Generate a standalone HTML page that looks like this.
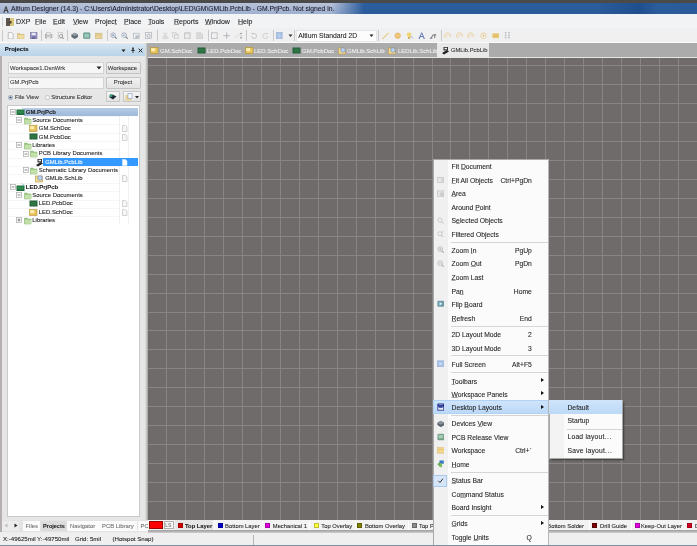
<!DOCTYPE html>
<html><head><meta charset="utf-8"><style>
*{margin:0;padding:0;box-sizing:border-box}
html,body{width:697px;height:546px;overflow:hidden;background:#ececec;font-family:"Liberation Sans",sans-serif;color:#222}
.a{position:absolute}
.t{position:absolute;white-space:pre;line-height:1;-webkit-text-stroke:0.08px currentColor}
u{text-decoration:underline;text-underline-offset:0.3px;text-decoration-thickness:0.5px;text-decoration-color:rgba(60,60,60,0.45)}
</style></head><body><div id="root" style="position:absolute;left:0;top:0;width:697px;height:546px;overflow:hidden;will-change:transform">
<div class="a" style="left:0px;top:0px;width:697px;height:14px;background:#2b5c9b"></div>
<div class="a" style="left:600px;top:2px;width:97px;height:12px;background:linear-gradient(90deg,#2a5a97,#1f4f8c 40%,#2c5d9b 60%,#2a5a98)"></div>
<div class="a" style="left:0px;top:0px;width:697px;height:2.5px;background:#4a4a4a"></div>
<div class="a" style="left:0px;top:2.5px;width:364px;height:11.5px;background:linear-gradient(90deg,rgba(43,92,155,0) 0%,rgba(43,92,155,0) 91%,#2b5c9b 100%),linear-gradient(180deg,#b9c3d9,#a9b7d4 60%,#9fb0d0)"></div>
<div class="a" style="left:600px;top:2.5px;width:0px;height:0px;"></div>
<svg class="a" style="left:3px;top:5.5px" width="6" height="7" viewBox="0 0 6 7"><path d="M0.3 6.7 L2.6 0.3 L3.4 0.3 L5.7 6.7 L4.6 6.7 L3 2 L1.4 6.7Z" fill="#3a3a3a"/><rect x="1.8" y="4" width="2.4" height="0.9" fill="#3a3a3a"/></svg>
<div class="t" style="left:11px;top:6.0px;font-size:6.75px;color:#1c1c2a">Altium Designer (14.3) - C:\Users\Administrator\Desktop\LED\GM\GMLib.PcbLib - GM.PrjPcb. Not signed in.</div>
<div class="a" style="left:0px;top:14px;width:697px;height:14px;background:#f2f3f5"></div>
<div class="a" style="left:2px;top:16.5px;width:1px;height:10px;background:#d4d4d4"></div>
<svg class="a" style="left:6px;top:17.5px" width="8" height="8.5" viewBox="0 0 8 8.5"><rect x="0" y="0" width="4" height="8.5" fill="#5f554c"/><rect x="4" y="0" width="4" height="8.5" fill="#d9c77e"/><rect x="3" y="3" width="2.5" height="2.5" fill="#4a4036"/></svg>
<div class="t" style="left:16px;top:17.7px;font-size:7px;color:#222">DXP</div>
<div class="t" style="left:35px;top:17.7px;font-size:7px;color:#222"><u>F</u>ile</div>
<div class="t" style="left:53px;top:17.7px;font-size:7px;color:#222"><u>E</u>dit</div>
<div class="t" style="left:73px;top:17.7px;font-size:7px;color:#222"><u>V</u>iew</div>
<div class="t" style="left:95px;top:17.7px;font-size:7px;color:#222">Projec<u>t</u></div>
<div class="t" style="left:124px;top:17.7px;font-size:7px;color:#222"><u>P</u>lace</div>
<div class="t" style="left:148px;top:17.7px;font-size:7px;color:#222"><u>T</u>ools</div>
<div class="t" style="left:174px;top:17.7px;font-size:7px;color:#222"><u>R</u>eports</div>
<div class="t" style="left:205px;top:17.7px;font-size:7px;color:#222"><u>W</u>indow</div>
<div class="t" style="left:238px;top:17.7px;font-size:7px;color:#222"><u>H</u>elp</div>
<div class="a" style="left:0px;top:28px;width:697px;height:14.5px;background:#f0f0f0"></div>
<div class="a" style="left:0px;top:41.5px;width:697px;height:1px;background:#fafafa"></div>
<div class="a" style="left:0px;top:42.5px;width:697px;height:1px;background:#bdbdbd"></div>
<div class="a" style="left:2px;top:30px;width:1px;height:11px;background:#c9c9c9"></div>
<div class="a" style="left:41px;top:30px;width:1px;height:11px;background:#c8c8c8"></div>
<div class="a" style="left:67px;top:30px;width:1px;height:11px;background:#c8c8c8"></div>
<div class="a" style="left:106.5px;top:30px;width:1px;height:11px;background:#c8c8c8"></div>
<div class="a" style="left:157px;top:30px;width:1px;height:11px;background:#c8c8c8"></div>
<div class="a" style="left:207.5px;top:30px;width:1px;height:11px;background:#c8c8c8"></div>
<div class="a" style="left:245.5px;top:30px;width:1px;height:11px;background:#c8c8c8"></div>
<div class="a" style="left:273px;top:30px;width:1px;height:11px;background:#c8c8c8"></div>
<div class="a" style="left:294.4px;top:30px;width:1px;height:11px;background:#c8c8c8"></div>
<div class="a" style="left:377.6px;top:30px;width:1px;height:11px;background:#c8c8c8"></div>
<div class="a" style="left:440.5px;top:30px;width:1px;height:11px;background:#c8c8c8"></div>
<svg class="a" style="left:7.31px;top:32.11px;opacity:0.8" width="7.38" height="7.38" viewBox="0 0 9 9"><path d="M1.5 0.5h4l2 2v6h-6z" fill="#fbfbfb" stroke="#a0a0a0" stroke-width="1"/></svg>
<svg class="a" style="left:17.31px;top:32.11px;opacity:0.8" width="7.38" height="7.38" viewBox="0 0 9 9"><path d="M0.5 2h3l1 1h4v5h-8z" fill="#e2c26a" stroke="#c0a050" stroke-width="0.8"/><path d="M1 4h8l-1 4h-7z" fill="#f1da8e"/></svg>
<svg class="a" style="left:30.31px;top:32.11px;opacity:0.8" width="7.38" height="7.38" viewBox="0 0 9 9"><rect x="0.5" y="0.5" width="8" height="8" fill="#7a78b8" stroke="#5a5890" stroke-width="0.8"/><rect x="2" y="1" width="5" height="3" fill="#e8e8f4"/><rect x="2.5" y="5.5" width="4" height="3" fill="#4a4880"/></svg>
<svg class="a" style="left:45.31px;top:32.11px;opacity:0.8" width="7.38" height="7.38" viewBox="0 0 9 9"><rect x="0.5" y="3" width="8" height="4" fill="#bfc3c8" stroke="#8a8e92" stroke-width="0.8"/><rect x="2" y="0.5" width="5" height="3" fill="#f4f4f4" stroke="#a0a0a0" stroke-width="0.6"/><rect x="2" y="6" width="5" height="2.5" fill="#fafafa" stroke="#a0a0a0" stroke-width="0.6"/></svg>
<svg class="a" style="left:57.31px;top:32.11px;opacity:0.8" width="7.38" height="7.38" viewBox="0 0 9 9"><path d="M1.5 0.5h5v8h-5z" fill="#f6f6f6" stroke="#a8a8a8" stroke-width="0.8"/><circle cx="5" cy="5" r="2" fill="none" stroke="#7a7a7a" stroke-width="1"/><path d="M6.5 6.5l2 2" stroke="#666" stroke-width="1"/></svg>
<svg class="a" style="left:71.31px;top:32.11px;opacity:0.8" width="7.38" height="7.38" viewBox="0 0 9 9"><path d="M4.5 1l4 2v3l-4 2.5l-4-2.5v-3z" fill="#3d4a55"/><path d="M4.5 1l4 2l-4 2l-4-2z" fill="#7d8c98"/></svg>
<svg class="a" style="left:83.31px;top:32.11px;opacity:0.8" width="7.38" height="7.38" viewBox="0 0 9 9"><rect x="0.5" y="1" width="8" height="7" rx="1" fill="#5d9a8c" stroke="#3f7b6e" stroke-width="0.8"/><rect x="2" y="2.5" width="5" height="4" fill="#8cc2b2"/></svg>
<svg class="a" style="left:95.31px;top:32.11px;opacity:0.8" width="7.38" height="7.38" viewBox="0 0 9 9"><rect x="0.5" y="1.5" width="8" height="6.5" fill="#e8cf86" stroke="#c4a95a" stroke-width="0.8"/><rect x="1" y="3" width="7" height="1" fill="#d1b465"/></svg>
<svg class="a" style="left:110.31px;top:32.11px;opacity:0.8" width="7.38" height="7.38" viewBox="0 0 9 9"><circle cx="3.8" cy="3.8" r="2.8" fill="#e9eef5" stroke="#8590a0" stroke-width="1"/><path d="M5.8 5.8l2.5 2.5" stroke="#6b7480" stroke-width="1.4"/><path d="M2.5 3.8h2.6M3.8 2.5v2.6" stroke="#5477b0" stroke-width="0.8"/></svg>
<svg class="a" style="left:121.31px;top:32.11px;opacity:0.8" width="7.38" height="7.38" viewBox="0 0 9 9"><circle cx="3.8" cy="3.8" r="2.8" fill="#e9eef5" stroke="#8590a0" stroke-width="1"/><path d="M5.8 5.8l2.5 2.5" stroke="#6b7480" stroke-width="1.4"/><path d="M2.5 3.8h2.6" stroke="#5477b0" stroke-width="0.8"/></svg>
<svg class="a" style="left:133.31px;top:32.11px;opacity:0.8" width="7.38" height="7.38" viewBox="0 0 9 9"><rect x="0.5" y="1.5" width="7" height="6.5" fill="#eef0f2" stroke="#9aa0a8" stroke-width="0.8"/><rect x="3" y="4" width="4" height="3.5" fill="#a8b2bd"/></svg>
<svg class="a" style="left:145.31px;top:32.11px;opacity:0.8" width="7.38" height="7.38" viewBox="0 0 9 9"><rect x="0.5" y="0.5" width="7.5" height="7.5" fill="#eef0f2" stroke="#9aa0a8" stroke-width="0.8"/><circle cx="4.5" cy="4.5" r="2" fill="none" stroke="#8a929c" stroke-width="0.9"/></svg>
<svg class="a" style="left:161.81px;top:32.11px;opacity:0.8" width="7.38" height="7.38" viewBox="0 0 9 9"><path d="M2 0.5l3 5M6 0.5l-3 5" stroke="#b9b9b9" stroke-width="0.9"/><circle cx="2.5" cy="7" r="1.4" fill="none" stroke="#b5b5b5" stroke-width="0.8"/><circle cx="5.8" cy="7" r="1.4" fill="none" stroke="#b5b5b5" stroke-width="0.8"/></svg>
<svg class="a" style="left:172.31px;top:32.11px;opacity:0.8" width="7.38" height="7.38" viewBox="0 0 9 9"><rect x="0.5" y="0.5" width="4.5" height="5.5" fill="#f4f4f4" stroke="#bdbdbd" stroke-width="0.8"/><rect x="3" y="3" width="4.5" height="5.5" fill="#eaeaea" stroke="#b5b5b5" stroke-width="0.8"/></svg>
<svg class="a" style="left:184.31px;top:32.11px;opacity:0.8" width="7.38" height="7.38" viewBox="0 0 9 9"><rect x="0.5" y="1" width="7" height="7.5" fill="#d8d8d8" stroke="#b0b0b0" stroke-width="0.8"/><rect x="2" y="3" width="4" height="4" fill="#eeeeee"/></svg>
<svg class="a" style="left:196.31px;top:32.11px;opacity:0.8" width="7.38" height="7.38" viewBox="0 0 9 9"><path d="M1 1h5l2 2v5.5h-7z" fill="#dcdcdc" stroke="#b8b8b8" stroke-width="0.8"/><path d="M2 4h4M2 6h4" stroke="#bcbcbc" stroke-width="0.6"/></svg>
<svg class="a" style="left:211.31px;top:32.11px;opacity:0.8" width="7.38" height="7.38" viewBox="0 0 9 9"><rect x="0.5" y="1" width="7" height="7" fill="none" stroke="#a0a4aa" stroke-width="0.9"/></svg>
<svg class="a" style="left:223.31px;top:32.11px;opacity:0.8" width="7.38" height="7.38" viewBox="0 0 9 9"><path d="M4.5 0.5v8M0.5 4.5h8" stroke="#8d939b" stroke-width="0.9"/></svg>
<svg class="a" style="left:234.31px;top:32.11px;opacity:0.8" width="7.38" height="7.38" viewBox="0 0 9 9"><path d="M1 5l2 2l4-5" fill="none" stroke="#d0d0d0" stroke-width="0.8"/></svg>
<svg class="a" style="left:238.95px;top:32.11px;opacity:0.8" width="4.10" height="7.38" viewBox="0 0 5 9"><path d="M2.5 0.5l1.5 2h-3zM2.5 8.5l1.5-2h-3z" fill="#727a84"/><path d="M2.5 2v5" stroke="#b0b4ba" stroke-width="0.8"/></svg>
<svg class="a" style="left:249.81px;top:32.11px;opacity:0.8" width="7.38" height="7.38" viewBox="0 0 9 9"><path d="M2 5a3 3 0 1 0 3-3h-2" fill="none" stroke="#b4b4b4" stroke-width="1.1"/><path d="M1.5 2l2-1.5v3z" fill="#b4b4b4"/></svg>
<svg class="a" style="left:262.31px;top:32.11px;opacity:0.8" width="7.38" height="7.38" viewBox="0 0 9 9"><path d="M7 5a3 3 0 1 1 -3-3h2" fill="none" stroke="#c4c4c4" stroke-width="1.1"/><path d="M7.5 2l-2-1.5v3z" fill="#c4c4c4"/></svg>
<svg class="a" style="left:276.31px;top:32.11px;opacity:0.8" width="7.38" height="7.38" viewBox="0 0 9 9"><rect x="0.5" y="0.5" width="7" height="8" fill="#9db9e2" stroke="#7e9ccc" stroke-width="0.8"/><path d="M4 1v7M1 4.5h6" stroke="#c0d4f0" stroke-width="0.6"/></svg>
<svg class="a" style="left:287.5px;top:34px" width="5" height="3" viewBox="0 0 5 3"><path d="M0.5 0.5h4l-2 2.5z" fill="#333"/></svg>
<div class="a" style="left:295.5px;top:29.5px;width:81px;height:12px;background:#fcfcfc;border:1px solid #e6e6e6"></div>
<div class="t" style="left:298.2px;top:32.98px;font-size:6.8px;color:#1e1e1e">Altium Standard 2D</div>
<svg class="a" style="left:368.5px;top:34px" width="5" height="3" viewBox="0 0 5 3"><path d="M0.5 0.5h4l-2 2.5z" fill="#222"/></svg>
<svg class="a" style="left:382.31px;top:32.11px;opacity:0.8" width="7.38" height="7.38" viewBox="0 0 9 9"><path d="M1 8l7-7" stroke="#e3c76a" stroke-width="1.4"/><path d="M0.5 8.5l1.5-0.5l-1-1z" fill="#c9a64a"/></svg>
<svg class="a" style="left:393.81px;top:32.11px;opacity:0.8" width="7.38" height="7.38" viewBox="0 0 9 9"><circle cx="4.5" cy="4.5" r="3.3" fill="#f1bf5e" stroke="#dc9d3a" stroke-width="0.9"/></svg>
<svg class="a" style="left:406.31px;top:32.11px;opacity:0.8" width="7.38" height="7.38" viewBox="0 0 9 9"><circle cx="3.8" cy="3.5" r="2.9" fill="#f3cf5a"/><rect x="2.5" y="6" width="2.6" height="2.5" fill="#c9a34a"/><path d="M6 5l2.5 3" stroke="#5a7aa8" stroke-width="0.9"/></svg>
<svg class="a" style="left:417.81px;top:32.11px;opacity:0.8" width="7.38" height="7.38" viewBox="0 0 9 9"><path d="M0.5 8.5L4 0.5h1L8.5 8.5h-1.5l-1-2.5h-3l-1 2.5z M3.3 5h2.4L4.5 2z" fill="#3d5fa8" fill-rule="evenodd"/></svg>
<svg class="a" style="left:429.40px;top:32.11px;opacity:0.8" width="8.20" height="7.38" viewBox="0 0 10 9"><path d="M1 7.5h3M3 7.5l1.5-4M5 3.5h4M7 3.5v4" stroke="#3e444c" stroke-width="1.1" fill="none"/></svg>
<svg class="a" style="left:444.31px;top:32.11px;opacity:0.8" width="7.38" height="7.38" viewBox="0 0 9 9"><path d="M2.2 7.6A3.6 3.6 0 1 1 7.6 6" fill="none" stroke="#e8bf74" stroke-width="1.1"/><path d="M3.6 6A1.2 1.2 0 1 1 5.6 5" fill="none" stroke="#e6c088" stroke-width="0.8"/></svg>
<svg class="a" style="left:455.81px;top:32.11px;opacity:0.8" width="7.38" height="7.38" viewBox="0 0 9 9"><path d="M2.2 7.6A3.6 3.6 0 1 1 7.6 6" fill="none" stroke="#e8bf74" stroke-width="1.1"/><path d="M3.6 6A1.2 1.2 0 1 1 5.6 5" fill="none" stroke="#e6c088" stroke-width="0.8"/></svg>
<svg class="a" style="left:467.11px;top:32.11px;opacity:0.8" width="7.38" height="7.38" viewBox="0 0 9 9"><path d="M2.2 7.6A3.6 3.6 0 1 1 7.6 6" fill="none" stroke="#e8bf74" stroke-width="1.1"/><path d="M3.6 6A1.2 1.2 0 1 1 5.6 5" fill="none" stroke="#e6c088" stroke-width="0.8"/></svg>
<svg class="a" style="left:480.31px;top:32.11px;opacity:0.8" width="7.38" height="7.38" viewBox="0 0 9 9"><circle cx="4.3" cy="4.5" r="3.4" fill="none" stroke="#ecc37a" stroke-width="1.1"/><circle cx="4.3" cy="4.5" r="1" fill="#d0a050"/></svg>
<svg class="a" style="left:491.81px;top:32.11px;opacity:0.8" width="7.38" height="7.38" viewBox="0 0 9 9"><rect x="0.5" y="1.5" width="8" height="6" fill="#ebc45e"/><path d="M1 3.5h7M1 5.5h7" stroke="#c99a35" stroke-width="0.7"/></svg>
<svg class="a" style="left:504.31px;top:32.11px;opacity:0.8" width="7.38" height="7.38" viewBox="0 0 9 9"><path d="M1 1h2M5 1h2M1 4h2M5 4h2M1 7h2M5 7h2" stroke="#7b8a9a" stroke-width="1"/><path d="M2 1v6M6 1v6" stroke="#b8c2cc" stroke-width="0.6"/></svg>
<div class="a" style="left:0px;top:43px;width:146px;height:489px;background:#e6e6e6"></div>
<div class="a" style="left:0px;top:56px;width:1.5px;height:476px;background:#b4b0b0"></div>
<div class="a" style="left:0px;top:43.5px;width:145px;height:12.5px;background:linear-gradient(180deg,#d3e5f2,#bad3e8)"></div>
<div class="t" style="left:4.8px;top:46.49px;font-size:6px;font-weight:bold;color:#101820;-webkit-text-stroke:0.15px currentColor">Projects</div>
<svg class="a" style="left:121px;top:48.5px" width="5" height="4" viewBox="0 0 5 4"><path d="M0.5 0.5h4l-2 2.5z" fill="#1a1a1a"/></svg>
<svg class="a" style="left:130.5px;top:47px" width="4" height="6" viewBox="0 0 4 6"><path d="M1.2 0.5h1.6v3h-1.6z" fill="#333"/><path d="M0.3 3.5h3.4M2 3.5v2.5" stroke="#222" stroke-width="0.8" fill="none"/></svg>
<svg class="a" style="left:138px;top:47.8px" width="5" height="5" viewBox="0 0 5 5"><path d="M0.7 0.7l3.6 3.6M4.3 0.7l-3.6 3.6" stroke="#1a1a1a" stroke-width="1"/></svg>
<div class="a" style="left:7.5px;top:61.5px;width:96px;height:12.5px;background:#f6f6f6;border:1px solid #d3d3d3"></div>
<div class="t" style="left:10px;top:65.53px;font-size:5.9px;color:#333">Workspace1.DsnWrk</div>
<svg class="a" style="left:95.5px;top:66px" width="6" height="4" viewBox="0 0 6 4"><path d="M0.5 0.5h5l-2.5 3z" fill="#222"/></svg>
<div class="a" style="left:105.5px;top:61.5px;width:35px;height:12.5px;background:linear-gradient(180deg,#f2f2f2,#e2e2e2);border:1px solid #c3c3c3;border-radius:1px"></div>
<div class="t" style="left:107.7px;top:65.53px;font-size:5.9px;color:#333">Workspace</div>
<div class="a" style="left:7.5px;top:76.5px;width:96px;height:12px;background:#f6f6f6;border:1px solid #d3d3d3"></div>
<div class="t" style="left:10px;top:80.23px;font-size:5.9px;color:#333">GM.PrjPcb</div>
<div class="a" style="left:105.5px;top:76.5px;width:35px;height:12px;background:linear-gradient(180deg,#f2f2f2,#e2e2e2);border:1px solid #c3c3c3;border-radius:1px"></div>
<div class="t" style="left:113.8px;top:80.43px;font-size:5.9px;color:#333">Project</div>
<svg class="a" style="left:7.5px;top:94.5px" width="5" height="5" viewBox="0 0 5 5"><circle cx="2.5" cy="2.5" r="2.1" fill="#e8eef4" stroke="#8a98a8" stroke-width="0.7"/><circle cx="2.5" cy="2.5" r="1.1" fill="#2e4d72"/></svg>
<div class="t" style="left:15px;top:94.63px;font-size:5.9px;color:#333">File View</div>
<svg class="a" style="left:44.5px;top:94.5px" width="5" height="5" viewBox="0 0 5 5"><circle cx="2.5" cy="2.5" r="2.1" fill="#f4f4f4" stroke="#b8b8b8" stroke-width="0.7"/></svg>
<div class="t" style="left:51.3px;top:94.63px;font-size:5.9px;color:#333">Structure Editor</div>
<div class="a" style="left:105.5px;top:91px;width:14px;height:10.5px;background:linear-gradient(180deg,#f6f6f6,#e2e2e2);border:1px solid #c8c8c8"></div>
<svg class="a" style="left:108px;top:92.5px" width="9" height="8" viewBox="0 0 9 8"><path d="M1 4l3.5-2.5l4 2l-3.5 3z" fill="#1d2a38"/><circle cx="3" cy="2.5" r="1.5" fill="#3a9a7a"/></svg>
<div class="a" style="left:122.5px;top:91px;width:18px;height:10.5px;background:linear-gradient(180deg,#f6f6f6,#e2e2e2);border:1px solid #c8c8c8"></div>
<svg class="a" style="left:124.5px;top:92.5px" width="9" height="8" viewBox="0 0 9 8"><rect x="0.5" y="2" width="6" height="5.5" fill="#e9d28c"/><rect x="3" y="0.5" width="4" height="5" fill="#f8f8ff" stroke="#7f9cc8" stroke-width="0.6"/></svg>
<svg class="a" style="left:134.5px;top:95.5px" width="4" height="3" viewBox="0 0 4 3"><path d="M0 0h4l-2 2.5z" fill="#222"/></svg>
<div class="a" style="left:7px;top:104.5px;width:133px;height:412px;background:#fff;border:1px solid #c9c9c9"></div>
<div class="a" style="left:119.2px;top:116px;width:0.8px;height:108px;background:#efefef"></div>
<div class="a" style="left:128.2px;top:116px;width:0.8px;height:108px;background:#efefef"></div>
<div class="a" style="left:23.5px;top:107.9px;width:114.5px;height:8px;background:linear-gradient(180deg,#b6cbe6,#9fb9dc)"></div>
<div class="a" style="left:8px;top:116.0px;width:111px;height:0.5px;background:#f6f6f6"></div>
<div class="t" style="left:25.8px;top:109.61px;font-size:5.95px;font-weight:bold;color:#222;-webkit-text-stroke:0.08px currentColor;">GM.PrjPcb</div>
<svg class="a" style="left:16.0px;top:107.4px" width="9" height="9" viewBox="0 0 9 9"><rect x="0.5" y="2.5" width="8" height="5.5" fill="#1f6b3a"/><rect x="1.5" y="3.5" width="6" height="3" fill="#2f8a4f"/><path d="M6 0.5l2 2" stroke="#5aa0c8" stroke-width="0.8"/></svg>
<svg class="a" style="left:9.8px;top:108.9px" width="6" height="6" viewBox="0 0 6 6"><rect x="0.5" y="0.5" width="5" height="5" fill="#fff" stroke="#a8a8a8" stroke-width="0.7"/><path d="M1.5 3h3" stroke="#555" stroke-width="0.7"/></svg>
<div class="a" style="left:8px;top:124.35px;width:111px;height:0.5px;background:#f6f6f6"></div>
<div class="t" style="left:32.3px;top:117.96px;font-size:5.95px;color:#222;-webkit-text-stroke:0.08px currentColor;">Source Documents</div>
<svg class="a" style="left:22.499999999999996px;top:115.75px" width="9" height="9" viewBox="0 0 9 9"><path d="M1.5 2h2.5l1 1h3v5h-6.5z" fill="#9cc783" stroke="#82b06a" stroke-width="0.5"/><rect x="2" y="3.8" width="6.3" height="4" fill="#c3e0aa"/></svg>
<svg class="a" style="left:16.299999999999997px;top:117.25px" width="6" height="6" viewBox="0 0 6 6"><rect x="0.5" y="0.5" width="5" height="5" fill="#fff" stroke="#a8a8a8" stroke-width="0.7"/><path d="M1.5 3h3" stroke="#555" stroke-width="0.7"/></svg>
<div class="a" style="left:8px;top:132.7px;width:111px;height:0.5px;background:#f6f6f6"></div>
<div class="t" style="left:38.8px;top:126.31px;font-size:5.95px;color:#222;-webkit-text-stroke:0.08px currentColor;">GM.SchDoc</div>
<svg class="a" style="left:28.999999999999996px;top:124.1px" width="9" height="9" viewBox="0 0 9 9"><rect x="0.5" y="1.5" width="7.5" height="6" fill="#e7c35a" stroke="#b59333" stroke-width="0.6"/><rect x="1.2" y="2.2" width="4" height="3" fill="#fbeeb6"/></svg>
<svg class="a" style="left:122px;top:125.3px" width="6" height="7" viewBox="0 0 6 7"><path d="M0.5 0.5h3l1.5 1.5v4.5h-4.5z" fill="#f6f6f6" stroke="#b8b8b8" stroke-width="0.6"/></svg>
<div class="a" style="left:8px;top:141.04999999999998px;width:111px;height:0.5px;background:#f6f6f6"></div>
<div class="t" style="left:38.8px;top:134.66px;font-size:5.95px;color:#222;-webkit-text-stroke:0.08px currentColor;">GM.PcbDoc</div>
<svg class="a" style="left:28.999999999999996px;top:132.45px" width="9" height="9" viewBox="0 0 9 9"><rect x="0.5" y="1.5" width="8" height="6" fill="#245e37"/><rect x="1.5" y="2.5" width="6" height="4" fill="#2e7444"/></svg>
<svg class="a" style="left:122px;top:133.64999999999998px" width="6" height="7" viewBox="0 0 6 7"><path d="M0.5 0.5h3l1.5 1.5v4.5h-4.5z" fill="#f6f6f6" stroke="#b8b8b8" stroke-width="0.6"/></svg>
<div class="a" style="left:8px;top:149.4px;width:111px;height:0.5px;background:#f6f6f6"></div>
<div class="t" style="left:32.3px;top:143.01px;font-size:5.95px;color:#222;-webkit-text-stroke:0.08px currentColor;">Libraries</div>
<svg class="a" style="left:22.499999999999996px;top:140.8px" width="9" height="9" viewBox="0 0 9 9"><path d="M1.5 2h2.5l1 1h3v5h-6.5z" fill="#9cc783" stroke="#82b06a" stroke-width="0.5"/><rect x="2" y="3.8" width="6.3" height="4" fill="#c3e0aa"/></svg>
<svg class="a" style="left:16.299999999999997px;top:142.3px" width="6" height="6" viewBox="0 0 6 6"><rect x="0.5" y="0.5" width="5" height="5" fill="#fff" stroke="#a8a8a8" stroke-width="0.7"/><path d="M1.5 3h3" stroke="#555" stroke-width="0.7"/></svg>
<div class="a" style="left:8px;top:157.75px;width:111px;height:0.5px;background:#f6f6f6"></div>
<div class="t" style="left:38.8px;top:151.36px;font-size:5.95px;color:#222;-webkit-text-stroke:0.08px currentColor;">PCB Library Documents</div>
<svg class="a" style="left:28.999999999999996px;top:149.15px" width="9" height="9" viewBox="0 0 9 9"><path d="M1.5 2h2.5l1 1h3v5h-6.5z" fill="#9cc783" stroke="#82b06a" stroke-width="0.5"/><rect x="2" y="3.8" width="6.3" height="4" fill="#c3e0aa"/></svg>
<svg class="a" style="left:22.799999999999997px;top:150.65px" width="6" height="6" viewBox="0 0 6 6"><rect x="0.5" y="0.5" width="5" height="5" fill="#fff" stroke="#a8a8a8" stroke-width="0.7"/><path d="M1.5 3h3" stroke="#555" stroke-width="0.7"/></svg>
<div class="a" style="left:43px;top:158.0px;width:95px;height:8px;background:#3399ff"></div>
<div class="a" style="left:8px;top:166.1px;width:111px;height:0.5px;background:#f6f6f6"></div>
<div class="t" style="left:45.2px;top:159.71px;font-size:5.95px;color:#fff;-webkit-text-stroke:0.08px currentColor;">GMLib.PcbLib</div>
<svg class="a" style="left:35.400000000000006px;top:157.5px" width="9" height="9" viewBox="0 0 9 9"><path d="M1 7l5-3l2 1.5l-5 3z" fill="#222"/><rect x="2.5" y="1" width="4.5" height="3.5" fill="#333"/><rect x="3.5" y="1.8" width="2.5" height="1.5" fill="#eee"/></svg>
<svg class="a" style="left:122px;top:158.7px" width="6" height="7" viewBox="0 0 6 7"><path d="M0.5 0.5h3l1.5 1.5v4.5h-4.5z" fill="#ffffff" stroke="#dfefff" stroke-width="0.6"/></svg>
<div class="a" style="left:8px;top:174.45px;width:111px;height:0.5px;background:#f6f6f6"></div>
<div class="t" style="left:38.8px;top:168.06px;font-size:5.95px;color:#222;-webkit-text-stroke:0.08px currentColor;">Schematic Library Documents</div>
<svg class="a" style="left:28.999999999999996px;top:165.85px" width="9" height="9" viewBox="0 0 9 9"><path d="M1.5 2h2.5l1 1h3v5h-6.5z" fill="#9cc783" stroke="#82b06a" stroke-width="0.5"/><rect x="2" y="3.8" width="6.3" height="4" fill="#c3e0aa"/></svg>
<svg class="a" style="left:22.799999999999997px;top:167.35px" width="6" height="6" viewBox="0 0 6 6"><rect x="0.5" y="0.5" width="5" height="5" fill="#fff" stroke="#a8a8a8" stroke-width="0.7"/><path d="M1.5 3h3" stroke="#555" stroke-width="0.7"/></svg>
<div class="a" style="left:8px;top:182.79999999999998px;width:111px;height:0.5px;background:#f6f6f6"></div>
<div class="t" style="left:45.2px;top:176.41px;font-size:5.95px;color:#222;-webkit-text-stroke:0.08px currentColor;">GMLib.SchLib</div>
<svg class="a" style="left:35.400000000000006px;top:174.2px" width="9" height="9" viewBox="0 0 9 9"><rect x="0.5" y="2" width="7" height="6" fill="#f3d98a" stroke="#b89a50" stroke-width="0.6"/><circle cx="5" cy="4" r="2.3" fill="#bcd0f0" stroke="#6a88c0" stroke-width="0.6"/></svg>
<svg class="a" style="left:122px;top:175.39999999999998px" width="6" height="7" viewBox="0 0 6 7"><path d="M0.5 0.5h3l1.5 1.5v4.5h-4.5z" fill="#f6f6f6" stroke="#b8b8b8" stroke-width="0.6"/></svg>
<div class="a" style="left:8px;top:191.15px;width:111px;height:0.5px;background:#f6f6f6"></div>
<div class="t" style="left:25.8px;top:184.76px;font-size:5.95px;font-weight:bold;color:#222;-webkit-text-stroke:0.08px currentColor;">LED.PrjPcb</div>
<svg class="a" style="left:16.0px;top:182.55px" width="9" height="9" viewBox="0 0 9 9"><rect x="0.5" y="2.5" width="8" height="5.5" fill="#1f6b3a"/><rect x="1.5" y="3.5" width="6" height="3" fill="#2f8a4f"/><path d="M6 0.5l2 2" stroke="#5aa0c8" stroke-width="0.8"/></svg>
<svg class="a" style="left:9.8px;top:184.05px" width="6" height="6" viewBox="0 0 6 6"><rect x="0.5" y="0.5" width="5" height="5" fill="#fff" stroke="#a8a8a8" stroke-width="0.7"/><path d="M1.5 3h3" stroke="#555" stroke-width="0.7"/></svg>
<div class="a" style="left:8px;top:199.5px;width:111px;height:0.5px;background:#f6f6f6"></div>
<div class="t" style="left:32.3px;top:193.11px;font-size:5.95px;color:#222;-webkit-text-stroke:0.08px currentColor;">Source Documents</div>
<svg class="a" style="left:22.499999999999996px;top:190.9px" width="9" height="9" viewBox="0 0 9 9"><path d="M1.5 2h2.5l1 1h3v5h-6.5z" fill="#9cc783" stroke="#82b06a" stroke-width="0.5"/><rect x="2" y="3.8" width="6.3" height="4" fill="#c3e0aa"/></svg>
<svg class="a" style="left:16.299999999999997px;top:192.4px" width="6" height="6" viewBox="0 0 6 6"><rect x="0.5" y="0.5" width="5" height="5" fill="#fff" stroke="#a8a8a8" stroke-width="0.7"/><path d="M1.5 3h3" stroke="#555" stroke-width="0.7"/></svg>
<div class="a" style="left:8px;top:207.85px;width:111px;height:0.5px;background:#f6f6f6"></div>
<div class="t" style="left:38.8px;top:201.46px;font-size:5.95px;color:#222;-webkit-text-stroke:0.08px currentColor;">LED.PcbDoc</div>
<svg class="a" style="left:28.999999999999996px;top:199.25px" width="9" height="9" viewBox="0 0 9 9"><rect x="0.5" y="1.5" width="8" height="6" fill="#245e37"/><rect x="1.5" y="2.5" width="6" height="4" fill="#2e7444"/></svg>
<svg class="a" style="left:122px;top:200.45px" width="6" height="7" viewBox="0 0 6 7"><path d="M0.5 0.5h3l1.5 1.5v4.5h-4.5z" fill="#f6f6f6" stroke="#b8b8b8" stroke-width="0.6"/></svg>
<div class="a" style="left:8px;top:216.2px;width:111px;height:0.5px;background:#f6f6f6"></div>
<div class="t" style="left:38.8px;top:209.81px;font-size:5.95px;color:#222;-webkit-text-stroke:0.08px currentColor;">LED.SchDoc</div>
<svg class="a" style="left:28.999999999999996px;top:207.6px" width="9" height="9" viewBox="0 0 9 9"><rect x="0.5" y="1.5" width="7.5" height="6" fill="#e7c35a" stroke="#b59333" stroke-width="0.6"/><rect x="1.2" y="2.2" width="4" height="3" fill="#fbeeb6"/></svg>
<svg class="a" style="left:122px;top:208.79999999999998px" width="6" height="7" viewBox="0 0 6 7"><path d="M0.5 0.5h3l1.5 1.5v4.5h-4.5z" fill="#f6f6f6" stroke="#b8b8b8" stroke-width="0.6"/></svg>
<div class="t" style="left:32.3px;top:218.16px;font-size:5.95px;color:#222;-webkit-text-stroke:0.08px currentColor;">Libraries</div>
<svg class="a" style="left:22.499999999999996px;top:215.95px" width="9" height="9" viewBox="0 0 9 9"><path d="M1.5 2h2.5l1 1h3v5h-6.5z" fill="#9cc783" stroke="#82b06a" stroke-width="0.5"/><rect x="2" y="3.8" width="6.3" height="4" fill="#c3e0aa"/></svg>
<svg class="a" style="left:16.299999999999997px;top:217.45px" width="6" height="6" viewBox="0 0 6 6"><rect x="0.5" y="0.5" width="5" height="5" fill="#fff" stroke="#a8a8a8" stroke-width="0.7"/><path d="M1.5 3h3" stroke="#555" stroke-width="0.7"/><path d="M3 1.5v3" stroke="#555" stroke-width="0.7"/></svg>
<div class="a" style="left:1.5px;top:519.5px;width:146.5px;height:12px;background:#e3e3e3"></div>
<div class="a" style="left:2px;top:520.5px;width:17px;height:10px;background:#ececec"></div>
<svg class="a" style="left:4px;top:522.5px" width="4" height="5" viewBox="0 0 4 5"><path d="M3.5 0.5v4l-3-2z" fill="#c0c0c0"/></svg>
<svg class="a" style="left:13.5px;top:522.5px" width="4" height="5" viewBox="0 0 4 5"><path d="M0.5 0.5v4l3-2z" fill="#222"/></svg>
<div class="a" style="left:22.5px;top:520.5px;width:17.5px;height:10px;background:#fbfbfb"></div>
<div class="t" style="left:25.5px;top:523.93px;font-size:5.9px;color:#707070;">Files</div>
<div class="a" style="left:40.5px;top:520.5px;width:26px;height:10px;background:#dcdcdc"></div>
<div class="t" style="left:43.1px;top:524.08px;font-size:5.5px;color:#222;font-weight:bold;">Projects</div>
<div class="a" style="left:67px;top:520.5px;width:31.5px;height:10px;background:#fbfbfb"></div>
<div class="t" style="left:70px;top:523.93px;font-size:5.9px;color:#707070;">Navigator</div>
<div class="a" style="left:99px;top:520.5px;width:38px;height:10px;background:#fbfbfb"></div>
<div class="t" style="left:102px;top:523.93px;font-size:5.9px;color:#707070;">PCB Library</div>
<div class="a" style="left:137.5px;top:520.5px;width:10.5px;height:10px;background:#fbfbfb"></div>
<div class="t" style="left:140.5px;top:523.93px;font-size:5.9px;color:#707070;">PC</div>
<div class="a" style="left:145px;top:43px;width:3px;height:476.5px;background:linear-gradient(90deg,#dedede 0,#d8d8d8 30%,#9c9c9c 100%)"></div>
<div class="a" style="left:148px;top:43px;width:549px;height:14px;background:#ababab"></div>
<div class="a" style="left:148px;top:56.6px;width:549px;height:1.6px;background:#e6e6e6"></div>
<div class="a" style="left:437px;top:43px;width:52px;height:14px;background:#e8e8e8"></div>
<svg class="a" style="left:149.5px;top:46px" width="9" height="9" viewBox="0 0 9 9"><rect x="0.5" y="1.5" width="7.5" height="6" fill="#e7c35a" stroke="#b59333" stroke-width="0.6"/><rect x="1.2" y="2.2" width="4" height="3" fill="#fbeeb6"/></svg>
<div class="t" style="left:160px;top:47.59px;font-size:6px;color:#f0f0f0">GM.SchDoc</div>
<svg class="a" style="left:196.5px;top:46px" width="9" height="9" viewBox="0 0 9 9"><rect x="0.5" y="1.5" width="8" height="6" fill="#245e37"/><rect x="1.5" y="2.5" width="6" height="4" fill="#2e7444"/></svg>
<div class="t" style="left:207px;top:47.59px;font-size:6px;color:#f0f0f0">LED.PcbDoc</div>
<svg class="a" style="left:244.5px;top:46px" width="9" height="9" viewBox="0 0 9 9"><rect x="0.5" y="1.5" width="7.5" height="6" fill="#e7c35a" stroke="#b59333" stroke-width="0.6"/><rect x="1.2" y="2.2" width="4" height="3" fill="#fbeeb6"/></svg>
<div class="t" style="left:254px;top:47.59px;font-size:6px;color:#f0f0f0">LED.SchDoc</div>
<svg class="a" style="left:292px;top:46px" width="9" height="9" viewBox="0 0 9 9"><rect x="0.5" y="1.5" width="8" height="6" fill="#245e37"/><rect x="1.5" y="2.5" width="6" height="4" fill="#2e7444"/></svg>
<div class="t" style="left:302px;top:47.59px;font-size:6px;color:#f0f0f0">GM.PcbDoc</div>
<svg class="a" style="left:337.5px;top:46px" width="9" height="9" viewBox="0 0 9 9"><rect x="0.5" y="2" width="7" height="6" fill="#f3d98a" stroke="#b89a50" stroke-width="0.6"/><circle cx="5" cy="4" r="2.3" fill="#bcd0f0" stroke="#6a88c0" stroke-width="0.6"/></svg>
<div class="t" style="left:347px;top:47.59px;font-size:6px;color:#f0f0f0">GMLib.SchLib</div>
<svg class="a" style="left:387.5px;top:46px" width="9" height="9" viewBox="0 0 9 9"><rect x="0.5" y="2" width="7" height="6" fill="#f3d98a" stroke="#b89a50" stroke-width="0.6"/><circle cx="5" cy="4" r="2.3" fill="#bcd0f0" stroke="#6a88c0" stroke-width="0.6"/></svg>
<div class="t" style="left:398px;top:47.59px;font-size:6px;color:#f0f0f0">LEDLib.SchLib</div>
<svg class="a" style="left:440.5px;top:46px" width="9" height="9" viewBox="0 0 9 9"><path d="M1 7l5-3l2 1.5l-5 3z" fill="#222"/><rect x="2.5" y="1" width="4.5" height="3.5" fill="#333"/><rect x="3.5" y="1.8" width="2.5" height="1.5" fill="#eee"/></svg>
<div class="t" style="left:451px;top:47.67px;font-size:5.8px;color:#333">GMLib.PcbLib</div>
<svg class="a" style="left:148px;top:58px" width="549" height="462"><rect width="549" height="462" fill="#6f6b6a"/><g stroke="#898584" stroke-width="1"><line x1="18.50" y1="0" x2="18.50" y2="462" /><line x1="37.50" y1="0" x2="37.50" y2="462" /><line x1="56.50" y1="0" x2="56.50" y2="462" /><line x1="75.50" y1="0" x2="75.50" y2="462" /><line x1="94.50" y1="0" x2="94.50" y2="462" /><line x1="113.50" y1="0" x2="113.50" y2="462" /><line x1="132.50" y1="0" x2="132.50" y2="462" /><line x1="151.50" y1="0" x2="151.50" y2="462" /><line x1="170.50" y1="0" x2="170.50" y2="462" /><line x1="189.50" y1="0" x2="189.50" y2="462" /><line x1="208.50" y1="0" x2="208.50" y2="462" /><line x1="227.50" y1="0" x2="227.50" y2="462" /><line x1="246.50" y1="0" x2="246.50" y2="462" /><line x1="265.50" y1="0" x2="265.50" y2="462" /><line x1="284.50" y1="0" x2="284.50" y2="462" /><line x1="302.50" y1="0" x2="302.50" y2="462" /><line x1="321.50" y1="0" x2="321.50" y2="462" /><line x1="340.50" y1="0" x2="340.50" y2="462" /><line x1="359.50" y1="0" x2="359.50" y2="462" /><line x1="378.50" y1="0" x2="378.50" y2="462" /><line x1="397.50" y1="0" x2="397.50" y2="462" /><line x1="416.50" y1="0" x2="416.50" y2="462" /><line x1="435.50" y1="0" x2="435.50" y2="462" /><line x1="454.50" y1="0" x2="454.50" y2="462" /><line x1="473.50" y1="0" x2="473.50" y2="462" /><line x1="492.50" y1="0" x2="492.50" y2="462" /><line x1="511.50" y1="0" x2="511.50" y2="462" /><line x1="530.50" y1="0" x2="530.50" y2="462" /><line x1="0" y1="7.50" x2="549" y2="7.50" /><line x1="0" y1="26.50" x2="549" y2="26.50" /><line x1="0" y1="45.50" x2="549" y2="45.50" /><line x1="0" y1="64.50" x2="549" y2="64.50" /><line x1="0" y1="83.50" x2="549" y2="83.50" /><line x1="0" y1="102.50" x2="549" y2="102.50" /><line x1="0" y1="121.50" x2="549" y2="121.50" /><line x1="0" y1="140.50" x2="549" y2="140.50" /><line x1="0" y1="159.50" x2="549" y2="159.50" /><line x1="0" y1="178.50" x2="549" y2="178.50" /><line x1="0" y1="197.50" x2="549" y2="197.50" /><line x1="0" y1="216.50" x2="549" y2="216.50" /><line x1="0" y1="235.50" x2="549" y2="235.50" /><line x1="0" y1="254.50" x2="549" y2="254.50" /><line x1="0" y1="272.50" x2="549" y2="272.50" /><line x1="0" y1="291.50" x2="549" y2="291.50" /><line x1="0" y1="310.50" x2="549" y2="310.50" /><line x1="0" y1="329.50" x2="549" y2="329.50" /><line x1="0" y1="348.50" x2="549" y2="348.50" /><line x1="0" y1="367.50" x2="549" y2="367.50" /><line x1="0" y1="386.50" x2="549" y2="386.50" /><line x1="0" y1="405.50" x2="549" y2="405.50" /><line x1="0" y1="424.50" x2="549" y2="424.50" /><line x1="0" y1="443.50" x2="549" y2="443.50" /></g></svg>
<div class="a" style="left:148px;top:520px;width:549px;height:10px;background:#f3f3f3"></div>
<div class="a" style="left:148px;top:530px;width:549px;height:2.5px;background:linear-gradient(180deg,#9c9c9c,#cfcfcf)"></div>
<div class="a" style="left:149px;top:521.3px;width:13.5px;height:7.8px;background:#ff0000;border:1px solid #9a0000"></div>
<div class="a" style="left:163.5px;top:521.3px;width:10px;height:7.8px;background:#f8f8f8;border:1px solid #b0b0b0"></div>
<div class="t" style="left:165.3px;top:523.38px;font-size:5px;color:#777">LS</div>
<div class="a" style="left:175px;top:520px;width:38px;height:10px;background:#e6e6e6"></div>
<div class="a" style="left:177.8px;top:523px;width:5px;height:5px;background:#d40000;border:0.5px solid rgba(0,0,0,0.25)"></div>
<div class="t" style="left:185px;top:523.57px;font-size:5.8px;color:#222;font-weight:bold;">Top Layer</div>
<div class="a" style="left:217.8px;top:523px;width:5px;height:5px;background:#0000cc;border:0.5px solid rgba(0,0,0,0.25)"></div>
<div class="t" style="left:225.1px;top:523.57px;font-size:5.8px;color:#222;">Bottom Layer</div>
<div class="a" style="left:265.2px;top:523px;width:5px;height:5px;background:#e000e0;border:0.5px solid rgba(0,0,0,0.25)"></div>
<div class="t" style="left:272.8px;top:523.57px;font-size:5.8px;color:#222;">Mechanical 1</div>
<div class="a" style="left:313.5px;top:523px;width:5px;height:5px;background:#ffff40;border:0.5px solid rgba(0,0,0,0.25)"></div>
<div class="t" style="left:321.3px;top:523.57px;font-size:5.8px;color:#222;">Top Overlay</div>
<div class="a" style="left:357.2px;top:523px;width:5px;height:5px;background:#808000;border:0.5px solid rgba(0,0,0,0.25)"></div>
<div class="t" style="left:365px;top:523.57px;font-size:5.8px;color:#222;">Bottom Overlay</div>
<div class="a" style="left:412px;top:523px;width:5px;height:5px;background:#8c8c8c;border:0.5px solid rgba(0,0,0,0.25)"></div>
<div class="t" style="left:419px;top:523.57px;font-size:5.8px;color:#222;">Top Paste</div>
<div class="t" style="left:547.3px;top:523.57px;font-size:5.8px;color:#222;">Bottom Solder</div>
<div class="a" style="left:592.2px;top:523px;width:5px;height:5px;background:#7a0000;border:0.5px solid rgba(0,0,0,0.25)"></div>
<div class="t" style="left:600px;top:523.57px;font-size:5.8px;color:#222;">Drill Guide</div>
<div class="a" style="left:635.2px;top:523px;width:5px;height:5px;background:#e000e0;border:0.5px solid rgba(0,0,0,0.25)"></div>
<div class="t" style="left:641px;top:523.57px;font-size:5.8px;color:#222;">Keep-Out Layer</div>
<div class="a" style="left:687px;top:523px;width:5px;height:5px;background:#d40020;border:0.5px solid rgba(0,0,0,0.25)"></div>
<div class="t" style="left:695px;top:523.57px;font-size:5.8px;color:#222;">Drill Drawing</div>
<div class="a" style="left:214px;top:520.5px;width:0.8px;height:9px;background:#ffffff"></div>
<div class="a" style="left:261.5px;top:520.5px;width:0.8px;height:9px;background:#ffffff"></div>
<div class="a" style="left:309.3px;top:520.5px;width:0.8px;height:9px;background:#ffffff"></div>
<div class="a" style="left:354.5px;top:520.5px;width:0.8px;height:9px;background:#ffffff"></div>
<div class="a" style="left:408px;top:520.5px;width:0.8px;height:9px;background:#ffffff"></div>
<div class="a" style="left:589px;top:520.5px;width:0.8px;height:9px;background:#ffffff"></div>
<div class="a" style="left:631px;top:520.5px;width:0.8px;height:9px;background:#ffffff"></div>
<div class="a" style="left:684px;top:520.5px;width:0.8px;height:9px;background:#ffffff"></div>
<div class="a" style="left:0px;top:532.5px;width:697px;height:13.5px;background:#efefef"></div>
<div class="t" style="left:3px;top:535.85px;font-size:6.1px;color:#222">X:-49625mil Y:-49750mil</div>
<div class="t" style="left:75px;top:535.85px;font-size:6.1px;color:#222">Grid: 5mil</div>
<div class="t" style="left:112.5px;top:535.85px;font-size:6.1px;color:#222">(Hotspot Snap)</div>
<div class="a" style="left:252.5px;top:535px;width:0.8px;height:9.5px;background:#b5b5b5"></div>
<div class="a" style="left:432.5px;top:158.7px;width:116px;height:400px;background:#fbfbfb;border:1px solid #a8a8a8;border-right-color:#b8b8b8"></div>
<div class="a" style="left:433.5px;top:159.7px;width:14px;height:400px;background:#f0f0f0"></div>
<div class="a" style="left:433.3px;top:400.4px;width:114.5px;height:14px;background:linear-gradient(180deg,#cfe4fa,#bcd9f7);border:1px solid #b0d2f4;border-right:none"></div>
<div class="a" style="left:433.3px;top:474.8px;width:13.5px;height:11.8px;background:#d6e6f8;border:1px solid #a8c8ee"></div>
<div class="t" style="left:451.6px;top:164.45px;font-size:6.75px;color:#1e1e1e">Fit <u>D</u>ocument</div>
<div class="t" style="left:451.6px;top:177.65px;font-size:6.75px;color:#1e1e1e"><u>F</u>it All Objects</div>
<div class="t" style="right:165.2px;top:177.65px;font-size:6.75px;color:#1e1e1e">Ctrl+PgDn</div>
<svg class="a" style="left:436.6px;top:175.80px" width="7.6" height="7.6" viewBox="0 0 9 9"><rect x="0.5" y="1.5" width="7.5" height="6" fill="#e6e6e6" stroke="#bdbdbd" stroke-width="0.7"/><path d="M5 3l2 2l-2 2" stroke="#b0b0b0" stroke-width="0.8" fill="none"/></svg>
<div class="t" style="left:451.6px;top:191.35px;font-size:6.75px;color:#1e1e1e"><u>A</u>rea</div>
<svg class="a" style="left:436.6px;top:189.50px" width="7.6" height="7.6" viewBox="0 0 9 9"><rect x="0.5" y="1" width="7.5" height="6.5" fill="#e4e4e4" stroke="#bdbdbd" stroke-width="0.7"/><rect x="4" y="3" width="3" height="4" fill="#c8c8c8"/></svg>
<div class="t" style="left:451.6px;top:204.85px;font-size:6.75px;color:#1e1e1e">Around <u>P</u>oint</div>
<div class="t" style="left:451.6px;top:218.45px;font-size:6.75px;color:#1e1e1e">S<u>e</u>lected Objects</div>
<svg class="a" style="left:436.6px;top:216.60px" width="7.6" height="7.6" viewBox="0 0 9 9"><circle cx="3.5" cy="3.8" r="2.5" fill="none" stroke="#c0c0c0" stroke-width="0.9"/><path d="M5.3 5.6l2.3 2.3" stroke="#b8b8b8" stroke-width="1.1"/></svg>
<div class="t" style="left:451.6px;top:231.65px;font-size:6.75px;color:#1e1e1e">Filtered Objects</div>
<svg class="a" style="left:436.6px;top:229.80px" width="7.6" height="7.6" viewBox="0 0 9 9"><circle cx="3.5" cy="4.5" r="2.5" fill="none" stroke="#bcbcbc" stroke-width="0.9"/><path d="M5.3 6.3l2 2" stroke="#b0b0b0" stroke-width="1.1"/><path d="M7 0.5l-1 3" stroke="#c0c0c0" stroke-width="0.7"/></svg>
<div class="t" style="left:451.6px;top:248.15px;font-size:6.75px;color:#1e1e1e">Zoom <u>I</u>n</div>
<div class="t" style="right:165.2px;top:248.15px;font-size:6.75px;color:#1e1e1e">PgUp</div>
<svg class="a" style="left:436.6px;top:246.30px" width="7.6" height="7.6" viewBox="0 0 9 9"><circle cx="3.8" cy="3.8" r="2.8" fill="#eeeeee" stroke="#b4b4b4" stroke-width="0.9"/><path d="M5.8 5.8l2.3 2.3" stroke="#aaaaaa" stroke-width="1.2"/><path d="M2.6 3.8h2.4M3.8 2.6v2.4" stroke="#9a9a9a" stroke-width="0.7"/></svg>
<div class="t" style="left:451.6px;top:261.35px;font-size:6.75px;color:#1e1e1e">Zoom <u>O</u>ut</div>
<div class="t" style="right:165.2px;top:261.35px;font-size:6.75px;color:#1e1e1e">PgDn</div>
<svg class="a" style="left:436.6px;top:259.50px" width="7.6" height="7.6" viewBox="0 0 9 9"><circle cx="3.8" cy="3.8" r="2.8" fill="#eeeeee" stroke="#b4b4b4" stroke-width="0.9"/><path d="M5.8 5.8l2.3 2.3" stroke="#aaaaaa" stroke-width="1.2"/><path d="M2.6 3.8h2.4" stroke="#9a9a9a" stroke-width="0.7"/></svg>
<div class="t" style="left:451.6px;top:275.45px;font-size:6.75px;color:#1e1e1e"><u>Z</u>oom Last</div>
<div class="t" style="left:451.6px;top:288.85px;font-size:6.75px;color:#1e1e1e">Pa<u>n</u></div>
<div class="t" style="right:165.2px;top:288.85px;font-size:6.75px;color:#1e1e1e">Home</div>
<div class="t" style="left:451.6px;top:302.25px;font-size:6.75px;color:#1e1e1e">Flip <u>B</u>oard</div>
<svg class="a" style="left:436.6px;top:300.40px" width="7.6" height="7.6" viewBox="0 0 9 9"><rect x="0.5" y="1" width="8" height="7" rx="1" fill="#6f9aa8"/><path d="M3 2.5l3.5 2l-3.5 2z" fill="#d8eef2"/></svg>
<div class="t" style="left:451.6px;top:316.05px;font-size:6.75px;color:#1e1e1e"><u>R</u>efresh</div>
<div class="t" style="right:165.2px;top:316.05px;font-size:6.75px;color:#1e1e1e">End</div>
<div class="t" style="left:451.6px;top:332.35px;font-size:6.75px;color:#1e1e1e">2D Layout Mode</div>
<div class="t" style="right:165.2px;top:332.35px;font-size:6.75px;color:#1e1e1e">2</div>
<div class="t" style="left:451.6px;top:345.75px;font-size:6.75px;color:#1e1e1e">3D Layout Mode</div>
<div class="t" style="right:165.2px;top:345.75px;font-size:6.75px;color:#1e1e1e">3</div>
<div class="t" style="left:451.6px;top:362.15px;font-size:6.75px;color:#1e1e1e">Full Screen</div>
<div class="t" style="right:165.2px;top:362.15px;font-size:6.75px;color:#1e1e1e">Alt+F5</div>
<svg class="a" style="left:436.6px;top:360.30px" width="7.6" height="7.6" viewBox="0 0 9 9"><rect x="0.5" y="1" width="8" height="7" fill="#a8c2e8" stroke="#87a6d6" stroke-width="0.6"/><path d="M3 3l3 1.5l-3 1.5z" fill="#eaf2fc"/></svg>
<div class="t" style="left:451.6px;top:378.55px;font-size:6.75px;color:#1e1e1e"><u>T</u>oolbars</div>
<div class="a" style="left:540.5px;top:378.10px;width:0;height:0;border-left:3px solid #111;border-top:2.6px solid transparent;border-bottom:2.6px solid transparent"></div>
<div class="t" style="left:451.6px;top:391.85px;font-size:6.75px;color:#1e1e1e"><u>W</u>orkspace Panels</div>
<div class="a" style="left:540.5px;top:391.40px;width:0;height:0;border-left:3px solid #111;border-top:2.6px solid transparent;border-bottom:2.6px solid transparent"></div>
<div class="t" style="left:451.6px;top:405.15px;font-size:6.75px;color:#1e1e1e">Desktop Layouts</div>
<div class="a" style="left:540.5px;top:404.70px;width:0;height:0;border-left:3px solid #111;border-top:2.6px solid transparent;border-bottom:2.6px solid transparent"></div>
<svg class="a" style="left:436.6px;top:403.30px" width="7.6" height="7.6" viewBox="0 0 9 9"><rect x="0.5" y="0.5" width="8" height="4" rx="1" fill="#24328f"/><path d="M2 2h5" stroke="#d0d8f0" stroke-width="0.7"/><rect x="1" y="4.5" width="7" height="4" fill="#fff" stroke="#1a2a8a" stroke-width="1"/><path d="M2.5 5.5h4" stroke="#24328f" stroke-width="1"/></svg>
<div class="t" style="left:451.6px;top:421.35px;font-size:6.75px;color:#1e1e1e">Devices <u>V</u>iew</div>
<svg class="a" style="left:436.6px;top:419.50px" width="7.6" height="7.6" viewBox="0 0 9 9"><path d="M4.5 1l4 2.3v2.7l-4 2.5l-4-2.5v-2.7z" fill="#58606a"/><path d="M4.5 1l4 2.3l-4 2.2l-4-2.2z" fill="#8b939c"/></svg>
<div class="t" style="left:451.6px;top:434.85px;font-size:6.75px;color:#1e1e1e">PCB Release View</div>
<svg class="a" style="left:436.6px;top:433.00px" width="7.6" height="7.6" viewBox="0 0 9 9"><rect x="0.5" y="1" width="8" height="7.5" rx="1.5" fill="#78a48c"/><rect x="2" y="2.5" width="5" height="4.5" fill="#a9cbb6"/><path d="M1 7h7" stroke="#5d8a72" stroke-width="0.8"/></svg>
<div class="t" style="left:451.6px;top:448.15px;font-size:6.75px;color:#1e1e1e">Workspace</div>
<div class="t" style="right:165.2px;top:448.15px;font-size:6.75px;color:#1e1e1e">Ctrl+`</div>
<svg class="a" style="left:436.6px;top:446.30px" width="7.6" height="7.6" viewBox="0 0 9 9"><rect x="0.5" y="2" width="8" height="6.5" fill="#f3d68f" stroke="#d7b566" stroke-width="0.6"/><rect x="1" y="3.5" width="7" height="1" fill="#e6c576"/></svg>
<div class="t" style="left:451.6px;top:461.85px;font-size:6.75px;color:#1e1e1e"><u>H</u>ome</div>
<svg class="a" style="left:436.6px;top:460.00px" width="7.6" height="7.6" viewBox="0 0 9 9"><path d="M3 0.5h5v4h-5z" fill="#3c78c8"/><path d="M0.5 5l3-3v6z" fill="#58a552"/><path d="M3 4h3v4.5h-3z" fill="#7cbf5a"/></svg>
<div class="t" style="left:451.6px;top:478.45px;font-size:6.75px;color:#1e1e1e"><u>S</u>tatus Bar</div>
<svg class="a" style="left:436.6px;top:476.60px" width="7.6" height="7.6" viewBox="0 0 9 9"><path d="M1.5 4.5l2 2l3.5-4.5" fill="none" stroke="#222" stroke-width="1.1"/></svg>
<div class="t" style="left:451.6px;top:491.65px;font-size:6.75px;color:#1e1e1e">Co<u>m</u>mand Status</div>
<div class="t" style="left:451.6px;top:505.15px;font-size:6.75px;color:#1e1e1e">Board Insight</div>
<div class="a" style="left:540.5px;top:504.70px;width:0;height:0;border-left:3px solid #111;border-top:2.6px solid transparent;border-bottom:2.6px solid transparent"></div>
<div class="t" style="left:451.6px;top:521.25px;font-size:6.75px;color:#1e1e1e"><u>G</u>rids</div>
<div class="a" style="left:540.5px;top:520.80px;width:0;height:0;border-left:3px solid #111;border-top:2.6px solid transparent;border-bottom:2.6px solid transparent"></div>
<div class="t" style="left:451.6px;top:535.25px;font-size:6.75px;color:#1e1e1e">Toggle <u>U</u>nits</div>
<div class="t" style="right:165.2px;top:535.25px;font-size:6.75px;color:#1e1e1e">Q</div>
<div class="a" style="left:450.5px;top:241.6px;width:97px;height:1px;background:#d5d5d5"></div>
<div class="a" style="left:450.5px;top:325.9px;width:97px;height:1px;background:#d5d5d5"></div>
<div class="a" style="left:450.5px;top:355.2px;width:97px;height:1px;background:#d5d5d5"></div>
<div class="a" style="left:450.5px;top:371.7px;width:97px;height:1px;background:#d5d5d5"></div>
<div class="a" style="left:450.5px;top:414.8px;width:97px;height:1px;background:#d5d5d5"></div>
<div class="a" style="left:450.5px;top:472.1px;width:97px;height:1px;background:#d5d5d5"></div>
<div class="a" style="left:450.5px;top:515.3px;width:97px;height:1px;background:#d5d5d5"></div>
<div class="a" style="left:548.5px;top:399.7px;width:74.2px;height:59.5px;background:#fbfbfb;border:1px solid #a8a8a8;box-shadow:1.5px 1.5px 1.5px rgba(0,0,0,0.35)"></div>
<div class="a" style="left:549.5px;top:400.7px;width:14px;height:57.5px;background:#f3f3f3"></div>
<div class="a" style="left:549.3px;top:400.4px;width:72.5px;height:14px;background:linear-gradient(180deg,#cfe4fa,#bcd9f7)"></div>
<div class="t" style="left:567.5px;top:404.8px;font-size:6.75px;color:#1e1e1e">Default</div>
<div class="t" style="left:567.5px;top:418.2px;font-size:6.75px;color:#1e1e1e">Startup</div>
<div class="t" style="left:567.5px;top:434.4px;font-size:6.75px;color:#1e1e1e;letter-spacing:0.2px">Load layout<span style='letter-spacing:0.6px'>...</span></div>
<div class="t" style="left:567.5px;top:447.7px;font-size:6.75px;color:#1e1e1e;letter-spacing:0.2px">Save layout<span style='letter-spacing:0.6px'>...</span></div>
<div class="a" style="left:567px;top:428.8px;width:54.5px;height:1px;background:#d5d5d5"></div>
<div class="a" style="left:0px;top:545px;width:697px;height:1px;background:#7f8ea3"></div>
</div></body></html>
